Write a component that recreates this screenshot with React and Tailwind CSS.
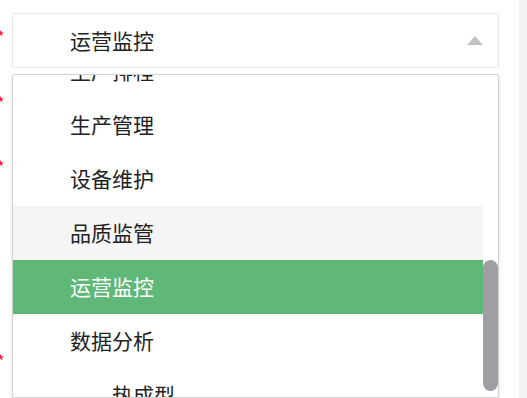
import React from "react";

const items = [
  { label: "生产排程" },
  { label: "生产管理" },
  { label: "设备维护" },
  { label: "品质监管", hover: true },
  { label: "运营监控", active: true },
  { label: "数据分析" },
  { label: "热成型", sub: true },
];

const App = () => {
  return (
    <div
      className="flex h-[398px] w-[527px] overflow-hidden bg-white"
      style={{ fontFamily: '"Noto Sans CJK SC", "Noto Sans", sans-serif' }}
    >
      {/* required marks of the labels, mostly cut off */}
      <div className="relative w-[12px] shrink-0 text-[14px] font-bold leading-none text-[#ff1f3d]">
        <span className="absolute -left-[3px] top-[29px]">*</span>
        <span className="absolute -left-[3px] top-[95px]">*</span>
        <span className="absolute -left-[3px] top-[159px]">*</span>
        <span className="absolute -left-[3px] top-[353px]">*</span>
      </div>

      <div className="flex w-[487px] shrink-0 flex-col pt-[13px]">
        {/* select box */}
        <div className="flex h-[56px] items-center justify-between rounded-[2px] border border-[#e6e6e6] pl-[57px] pr-[15px]">
          <span className="text-[21px] text-[#222]">运营监控</span>
          <span className="h-0 w-0 border-x-[8.5px] border-b-[9px] border-x-transparent border-b-[#c2c2c2]" />
        </div>

        {/* dropdown */}
        <div className="mt-[6px] flex h-[330px] overflow-hidden rounded-t-[2px] border border-[#d2d2d2] shadow-[0_2px_4px_rgba(0,0,0,0.12)]">
          <div className="-mt-[31px] flex w-[470px] flex-col">
            {items.map((item) => (
              <div
                key={item.label}
                className={`flex h-[54px] shrink-0 items-center text-[21px] ${
                  item.sub ? "pl-[99px]" : "pl-[57px]"
                } ${
                  item.active
                    ? "bg-[#5fb878] text-white"
                    : item.hover
                    ? "bg-[#f5f5f5] text-[#222]"
                    : "text-[#222]"
                }`}
              >
                {item.label}
              </div>
            ))}
          </div>
          <div className="flex-1 pt-[185px]">
            <div className="h-[131px] w-[15px] rounded-full bg-[#9e9ea3]" />
          </div>
        </div>
      </div>

      <div className="flex-1" />
      <div className="w-[8px] shrink-0 bg-[#f2f2f2]" />
    </div>
  );
};

export default App;
